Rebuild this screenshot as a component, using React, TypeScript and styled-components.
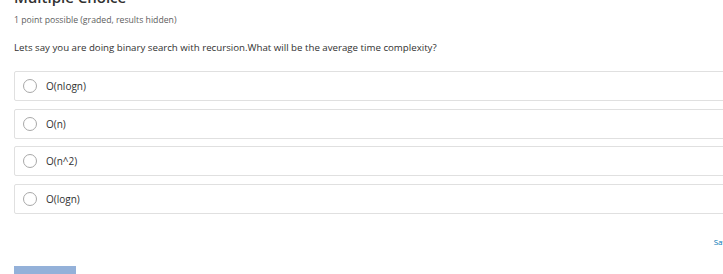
import styled, { createGlobalStyle } from 'styled-components';

const GlobalStyle = createGlobalStyle`
  html, body {
    margin: 0;
    padding: 0;
    background: #fff;
    overflow: hidden;
  }
  body {
    font-family: "Open Sans", "Noto Sans", sans-serif;
    color: #313131;
  }
`;

const Problem = styled.div`
  width: 723px;
  height: 274px;
  overflow: hidden;
  padding-left: 14px;
  box-sizing: border-box;
`;

const Title = styled.h3`
  margin: -13px 0 0;
  font-size: 15px;
  font-weight: 600;
  line-height: 20px;
  color: #313131;
`;

const Meta = styled.div`
  margin-top: 7px;
  font-size: 8.7px;
  line-height: 12px;
  color: #5e5e5e;
`;

const Question = styled.p`
  margin: 15px 0 0;
  font-size: 9.7px;
  line-height: 14px;
  color: #313131;
`;

const Choices = styled.div`
  margin-top: 16px;
  display: flex;
  flex-direction: column;
  gap: 7.7px;
  margin-right: -10px;
`;

const Choice = styled.label`
  display: flex;
  align-items: center;
  height: 30px;
  box-sizing: border-box;
  border: 1px solid #e0e0e0;
  border-radius: 2px;
  padding-left: 8px;
  font-size: 10px;
  color: #313131;
  cursor: pointer;
`;

const Radio = styled.span`
  width: 14px;
  height: 14px;
  border: 1px solid #a8a8a8;
  border-radius: 50%;
  box-sizing: border-box;
  margin-right: 9px;
  flex-shrink: 0;
`;

const Actions = styled.div`
  margin-top: 22px;
  display: flex;
  justify-content: flex-end;
  margin-right: -8px;
`;

const SaveLink = styled.span`
  font-size: 8px;
  color: #0075b4;
  line-height: 12px;
`;

const Submit = styled.button`
  margin-top: 18px;
  width: 62px;
  height: 20px;
  border: none;
  border-radius: 0;
  background: #94b1d9;
  display: block;
`;

const options = ['O(nlogn)', 'O(n)', 'O(n^2)', 'O(logn)'];

export default function App() {
  return (
    <>
      <GlobalStyle />
      <Problem>
        <Title>Multiple Choice</Title>
        <Meta>1 point possible (graded, results hidden)</Meta>
        <Question>
          Lets say you are doing binary search with recursion.What will be the average time complexity?
        </Question>
        <Choices>
          {options.map(o => (
            <Choice key={o}>
              <Radio />
              {o}
            </Choice>
          ))}
        </Choices>
        <Actions>
          <SaveLink>Save</SaveLink>
        </Actions>
        <Submit />
      </Problem>
    </>
  );
}
